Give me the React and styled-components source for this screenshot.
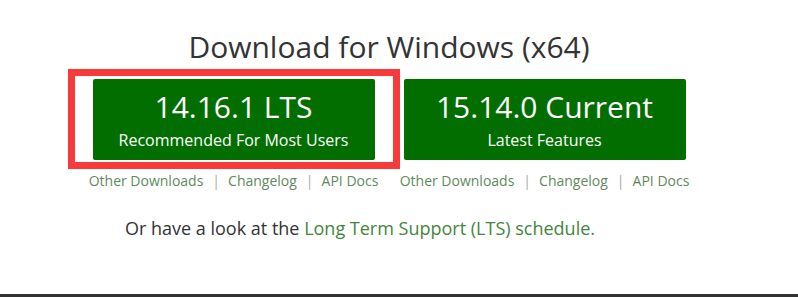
import React from "react";
import styled, { createGlobalStyle } from "styled-components";

const Global = createGlobalStyle`
  html, body { margin: 0; padding: 0; background: #fff; }
  body { font-family: "Open Sans", "Noto Sans", sans-serif; color: #333; }
`;

const Page = styled.div`
  height: 297px;
  display: flex;
  flex-direction: column;
  box-sizing: border-box;
`;

const Main = styled.main`
  flex: 1;
  display: flex;
  flex-direction: column;
  align-items: center;
  padding: 27px 20px 0 0;
`;

const Title = styled.h2`
  margin: 0;
  font-size: 30px;
  font-weight: 400;
  line-height: 40px;
  color: #333;
`;

const Row = styled.div`
  display: flex;
  gap: 29px;
  margin-top: 12px;
`;

const Column = styled.div`
  width: 282px;
  display: flex;
  flex-direction: column;
  align-items: center;
`;

const ButtonFrame = styled.div`
  position: relative;
`;

const Highlight = styled.div`
  position: absolute;
  left: -25px;
  right: -25px;
  top: -10px;
  bottom: -9px;
  border: 7px solid #f83a3a;
  pointer-events: none;
`;

const DownloadButton = styled.a`
  width: 282px;
  height: 81px;
  box-sizing: border-box;
  background: #026e00;
  border-radius: 2px;
  color: #fff;
  text-decoration: none;
  display: flex;
  flex-direction: column;
  align-items: center;
  justify-content: center;
`;

const Version = styled.span`
  font-size: 30px;
  line-height: 36px;
`;

const Sub = styled.span`
  font-size: 16px;
  line-height: 22px;
  margin-top: 4px;
`;

const Links = styled.div`
  display: flex;
  flex-shrink: 0;
  white-space: nowrap;
  margin-top: 11px;
  font-size: 14px;
  line-height: 20px;
`;

const SmallLink = styled.a`
  color: #5f895d;
  text-decoration: none;
`;

const Sep = styled.span`
  color: #aaa;
  padding: 0 8px 0 9px;
`;

const Note = styled.p`
  margin: 24px 58px 0 0;
  font-size: 18px;
  line-height: 26px;
  color: #333;
`;

const GreenLink = styled.a`
  color: #43853d;
  text-decoration: none;
`;

const Footer = styled.footer`
  height: 3px;
  background: #333;
`;

const builds = [
  { version: "14.16.1 LTS", sub: "Recommended For Most Users", marked: true },
  { version: "15.14.0 Current", sub: "Latest Features", marked: false },
];

function Build({ version, sub, marked }) {
  return (
    <Column>
      <ButtonFrame>
        {marked && <Highlight />}
        <DownloadButton href="#">
          <Version>{version}</Version>
          <Sub>{sub}</Sub>
        </DownloadButton>
      </ButtonFrame>
      <Links>
        <SmallLink href="#">Other Downloads</SmallLink>
        <Sep>|</Sep>
        <SmallLink href="#">Changelog</SmallLink>
        <Sep>|</Sep>
        <SmallLink href="#">API Docs</SmallLink>
      </Links>
    </Column>
  );
}

export default function App() {
  return (
    <Page>
      <Global />
      <Main>
        <Title>Download for Windows (x64)</Title>
        <Row>
          {builds.map((b) => (
            <Build key={b.version} {...b} />
          ))}
        </Row>
        <Note>
          Or have a look at the{" "}
          <GreenLink href="#">Long Term Support (LTS) schedule.</GreenLink>
        </Note>
      </Main>
      <Footer />
    </Page>
  );
}
